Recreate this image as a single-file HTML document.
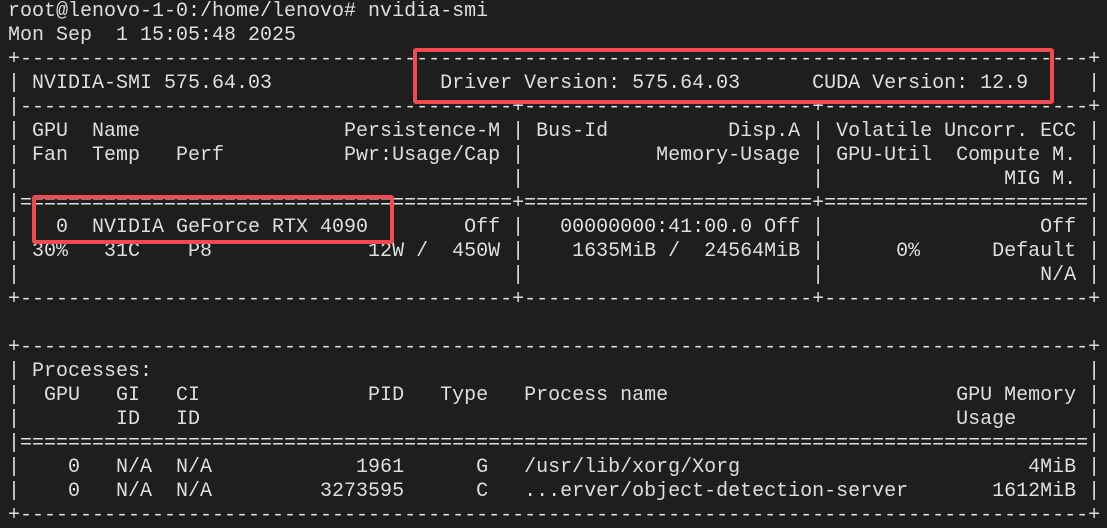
<!DOCTYPE html>
<html><head><meta charset="utf-8"><style>
html,body{margin:0;padding:0;background:#1e1e1e;width:1107px;height:525px;overflow:hidden}
pre{position:absolute;left:8px;top:0px;margin:0;font-family:"Liberation Mono",monospace;font-size:20px;line-height:24px;color:#dedede;white-space:pre}
.box{position:absolute;border:4px solid #f24a4f;border-radius:3px;box-sizing:border-box}
</style></head><body>
<pre>root@lenovo-1-0:/home/lenovo# nvidia-smi
Mon Sep  1 15:05:48 2025
+-----------------------------------------------------------------------------------------+
| NVIDIA-SMI 575.64.03              Driver Version: 575.64.03      CUDA Version: 12.9     |
|-----------------------------------------+------------------------+----------------------+
| GPU  Name                 Persistence-M | Bus-Id          Disp.A | Volatile Uncorr. ECC |
| Fan  Temp   Perf          Pwr:Usage/Cap |           Memory-Usage | GPU-Util  Compute M. |
|                                         |                        |               MIG M. |
|=========================================+========================+======================|
|   0  NVIDIA GeForce RTX 4090        Off |   00000000:41:00.0 Off |                  Off |
| 30%   31C    P8             12W /  450W |    1635MiB /  24564MiB |      0%      Default |
|                                         |                        |                  N/A |
+-----------------------------------------+------------------------+----------------------+

+-----------------------------------------------------------------------------------------+
| Processes:                                                                              |
|  GPU   GI   CI              PID   Type   Process name                        GPU Memory |
|        ID   ID                                                               Usage      |
|=========================================================================================|
|    0   N/A  N/A            1961      G   /usr/lib/xorg/Xorg                        4MiB |
|    0   N/A  N/A         3273595      C   ...erver/object-detection-server       1612MiB |
+-----------------------------------------------------------------------------------------+</pre>
<div class="box" style="left:413px;top:48px;width:641px;height:56px"></div>
<div class="box" style="left:32px;top:195px;width:362px;height:49px"></div>
</body></html>
